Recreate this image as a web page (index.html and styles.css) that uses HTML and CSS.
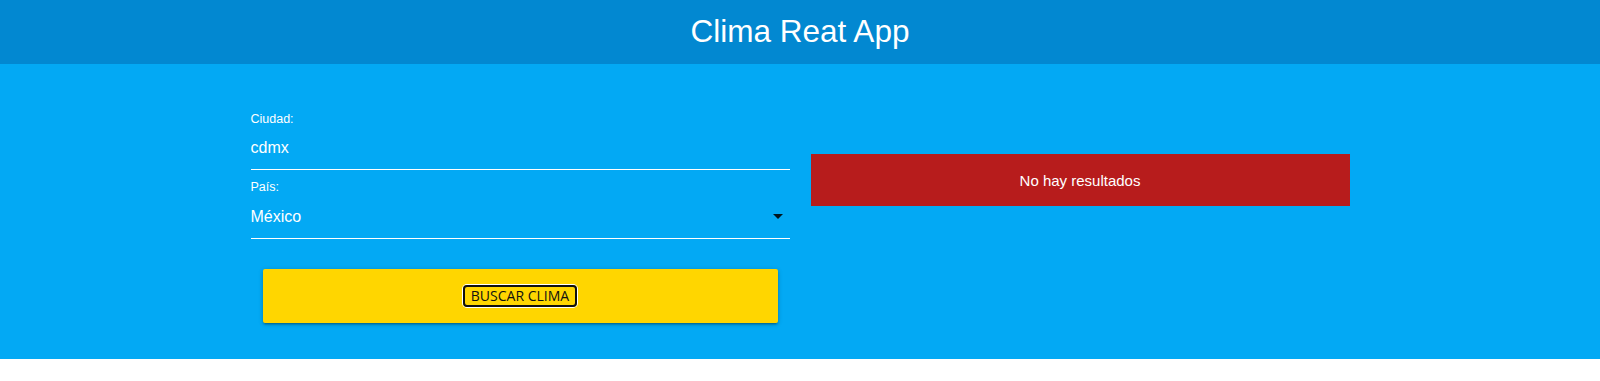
FILE: index.html
```html
<!DOCTYPE html>
<html lang="es">
<head>
    <meta charset="UTF-8">
    <meta name="viewport" content="width=device-width, initial-scale=1.0">
    <title>Clima Reat App</title>
    <link rel="stylesheet" href="styles.css">
</head>
<body>
    <header class="topbar">
        <h1 class="brand">Clima Reat App</h1>
    </header>

    <main class="panel">
        <div class="container">
            <div class="col">
                <form class="search">
                    <div class="field">
                        <label for="ciudad">Ciudad:</label>
                        <input id="ciudad" type="text" value="cdmx">
                    </div>
                    <div class="field">
                        <label>País:</label>
                        <div class="select">
                            <span>México</span>
                            <svg class="caret" width="24" height="24" viewBox="0 0 24 24"><path d="M7 10l5 5 5-5z"/></svg>
                        </div>
                    </div>
                    <div class="btn">
                        <span class="btn-label">BUSCAR CLIMA</span>
                    </div>
                </form>
            </div>
            <div class="col">
                <div class="alert">No hay resultados</div>
            </div>
        </div>
    </main>
</body>
</html>
```

FILE: styles.css
```css
body {
    margin: 0;
    padding: 0;
    background: #fff;
    font-family: 'Liberation Sans', Arial, sans-serif;
    color: #fff;
}
.topbar {
    height: 64px;
    background-color: #0288d1;
    display: flex;
    align-items: center;
    justify-content: center;
}
.brand {
    margin: 0;
    font-size: 31.5px;
    font-weight: normal;
    line-height: 1;
}
.panel {
    background-color: #03a9f4;
    padding: 48px 0 36px;
}
.container {
    width: 1120px;
    margin: 0 auto;
    display: grid;
    grid-template-columns: 1fr 1fr;
}
.col {
    padding: 0 10.5px;
}
.field label {
    display: block;
    font-size: 12.5px;
    line-height: 15px;
    height: 15px;
}
.field input,
.select {
    box-sizing: border-box;
    width: 100%;
    height: 43px;
    margin: 0;
    padding: 0;
    border: none;
    border-bottom: 1px solid #fff;
    background: transparent;
    color: #fff;
    font-family: 'Liberation Sans', Arial, sans-serif;
    font-size: 16px;
    outline: none;
}
.field + .field {
    margin-top: 10px;
}
.field + .field .select {
    height: 44px;
}
.select {
    display: flex;
    align-items: center;
    justify-content: space-between;
}
.caret {
    fill: rgba(0, 0, 0, 0.87);
    margin-top: -1px;
}
.btn {
    margin: 30px 12px 0 12px;
    height: 54px;
    background-color: #ffd600;
    border-radius: 2px;
    box-shadow: 0 2px 2px 0 rgba(0, 0, 0, 0.14), 0 3px 1px -2px rgba(0, 0, 0, 0.12), 0 1px 5px 0 rgba(0, 0, 0, 0.2);
    display: flex;
    align-items: center;
    justify-content: center;
}
.btn-label {
    font-family: 'Open Sans', sans-serif;
    font-size: 14px;
    line-height: 18px;
    color: #111;
    padding: 0 6px;
    border: 2px solid #101010;
    border-radius: 4px;
    box-shadow: 0 0 0 1px #fff;
}
.alert {
    margin-top: 42px;
    height: 52px;
    background-color: #b71c1c;
    display: flex;
    align-items: center;
    justify-content: center;
    font-size: 15px;
}
```
